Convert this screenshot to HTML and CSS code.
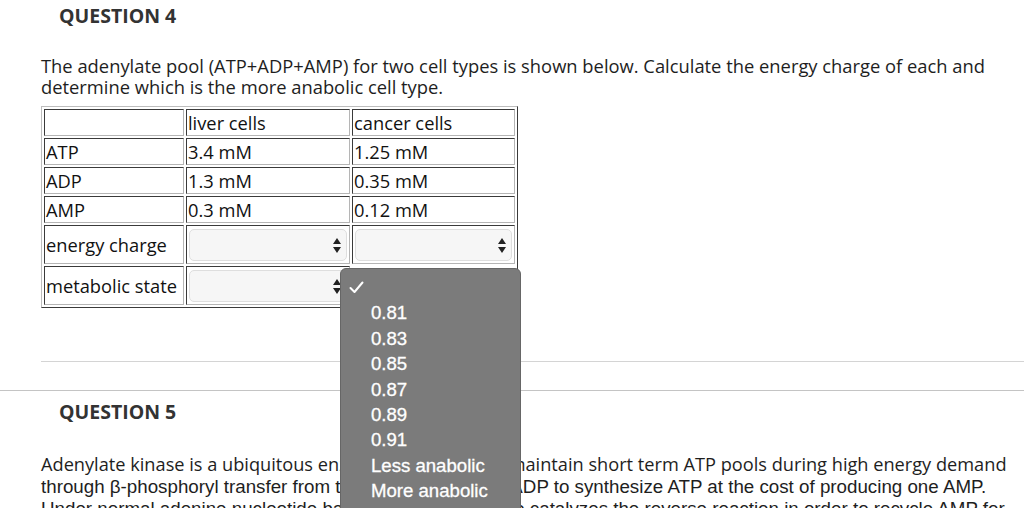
FILE: index.html
```html
<!DOCTYPE html>
<html>
<head>
<meta charset="utf-8">
<link rel="stylesheet" href="styles.css">
</head>
<body>
<div class="page">
  <section class="question q4">
    <h2 class="qtitle">QUESTION 4</h2>
    <p class="prompt">The adenylate pool (ATP+ADP+AMP) for two cell types is shown below. Calculate the energy charge of each and<br>determine which is the more anabolic cell type.</p>
    <table class="data">
      <tr class="row-sm"><td class="c1"></td><td class="c2">liver cells</td><td class="c3">cancer cells</td></tr>
      <tr class="row-sm"><td>ATP</td><td>3.4 mM</td><td>1.25 mM</td></tr>
      <tr class="row-sm"><td>ADP</td><td>1.3 mM</td><td>0.35 mM</td></tr>
      <tr class="row-sm"><td>AMP</td><td>0.3 mM</td><td>0.12 mM</td></tr>
      <tr class="row-lg"><td>energy charge</td><td><div class="sel"><svg class="arrows" viewBox="0 0 8 15" width="8" height="15"><path d="M4 0 L8 6 L0 6 Z M0 9 L8 9 L4 15 Z" fill="#222"/></svg></div></td><td><div class="sel"><svg class="arrows" viewBox="0 0 8 15" width="8" height="15"><path d="M4 0 L8 6 L0 6 Z M0 9 L8 9 L4 15 Z" fill="#222"/></svg></div></td></tr>
      <tr class="row-lg"><td>metabolic state</td><td><div class="sel"><svg class="arrows" viewBox="0 0 8 15" width="8" height="15"><path d="M4 0 L8 6 L0 6 Z M0 9 L8 9 L4 15 Z" fill="#222"/></svg></div></td><td class="empty"></td></tr>
    </table>
    <hr class="rule-inner">
  </section>
  <hr class="rule-full">
  <section class="question q5">
    <h2 class="qtitle">QUESTION 5</h2>
    <p class="prompt2"><span class="l1">Adenylate kinase is a ubiquitous enzyme that serves to maintain short term ATP pools during high energy demand</span><br><span class="l2">through β-phosphoryl transfer from two molecules of the ADP to synthesize ATP at the cost of producing one AMP.</span><br><span class="l2">Under normal adenine nucleotide balance, the AK enzyme catalyzes the reverse reaction in order to recycle AMP for</span></p>
  </section>
  <ul class="menu">
    <li class="checked"><svg viewBox="0 0 15 13" width="15" height="13"><path d="M1.5 7 L5.5 11 L13.5 1.5" fill="none" stroke="#fff" stroke-width="2" stroke-linecap="round" stroke-linejoin="round"/></svg></li>
    <li>0.81</li>
    <li>0.83</li>
    <li>0.85</li>
    <li>0.87</li>
    <li>0.89</li>
    <li>0.91</li>
    <li>Less anabolic</li>
    <li>More anabolic</li>
  </ul>
</div>
</body>
</html>
```

FILE: styles.css
```css
html, body {
  margin: 0;
  padding: 0;
  background: #fff;
  overflow: hidden;
}
.page {
  position: relative;
  width: 1024px;
  height: 508px;
  overflow: hidden;
  font-family: "Open Sans", sans-serif;
  color: #1e1e1e;
}
.question {
  padding-left: 41px;
}
.qtitle {
  margin: 0;
  padding-left: 18px;
  font-size: 19.5px;
  font-weight: 700;
  color: #333;
  line-height: 27px;
}
.q4 .qtitle {
  padding-top: 2px;
}
.prompt {
  margin: 26px 0 0 0;
  font-size: 18.35px;
  line-height: 21px;
  white-space: nowrap;
}
.data {
  margin-top: 9px;
  border-collapse: separate;
  border-spacing: 2px;
  border: 1px solid;
  border-color: #bdbdbd #3a3a3a #3a3a3a #bdbdbd;
  font-size: 18.3px;
  color: #111;
}
.data td {
  border: 1px solid;
  border-color: #3a3a3a #b5b5b5 #b5b5b5 #3a3a3a;
  padding: 0 1px;
  white-space: nowrap;
  line-height: 22px;
}
.data td.empty {
  border: none;
}
.c1 { width: 136px; }
.c2 { width: 160px; }
.c3 { width: 159px; }
.row-sm td { height: 25px; }
.row-lg td { height: 37px; }
.sel {
  position: relative;
  height: 30px;
  margin: 0 1px;
  border: 1px solid #dedede;
  border-radius: 5px;
  background: #f6f6f6;
}
.arrows {
  position: absolute;
  right: 5px;
  top: 8px;
  display: block;
}
.rule-inner {
  margin: 53px 0 0 0;
  border: none;
  border-top: 1px solid #d4d4d4;
}
.rule-full {
  margin: 28px 0 0 0;
  border: none;
  border-top: 1px solid #c4c4c4;
}
.q5 .qtitle {
  margin-top: 7px;
}
.prompt2 {
  margin: 29px 0 0 0;
  white-space: nowrap;
  line-height: 21px;
}
.l1 {
  font-size: 18.2px;
}
.l2 {
  font-family: "Liberation Sans", Arial, sans-serif;
  font-size: 18.75px;
}
.menu {
  position: absolute;
  left: 340px;
  top: 268px;
  width: 179px;
  margin: 0;
  padding: 6px 0 0 0;
  list-style: none;
  background: #7b7b7b;
  border: 1px solid #666;
  border-radius: 6px;
  font-family: "Liberation Sans", Arial, sans-serif;
  font-size: 18.6px;
  color: #fff;
  -webkit-text-stroke: 0.3px #fff;
  height: 260px;
}
.menu li {
  height: 25.4px;
  line-height: 25.4px;
  padding-left: 30px;
}
.menu li.checked {
  padding-left: 8px;
  display: flex;
  align-items: center;
}
```
